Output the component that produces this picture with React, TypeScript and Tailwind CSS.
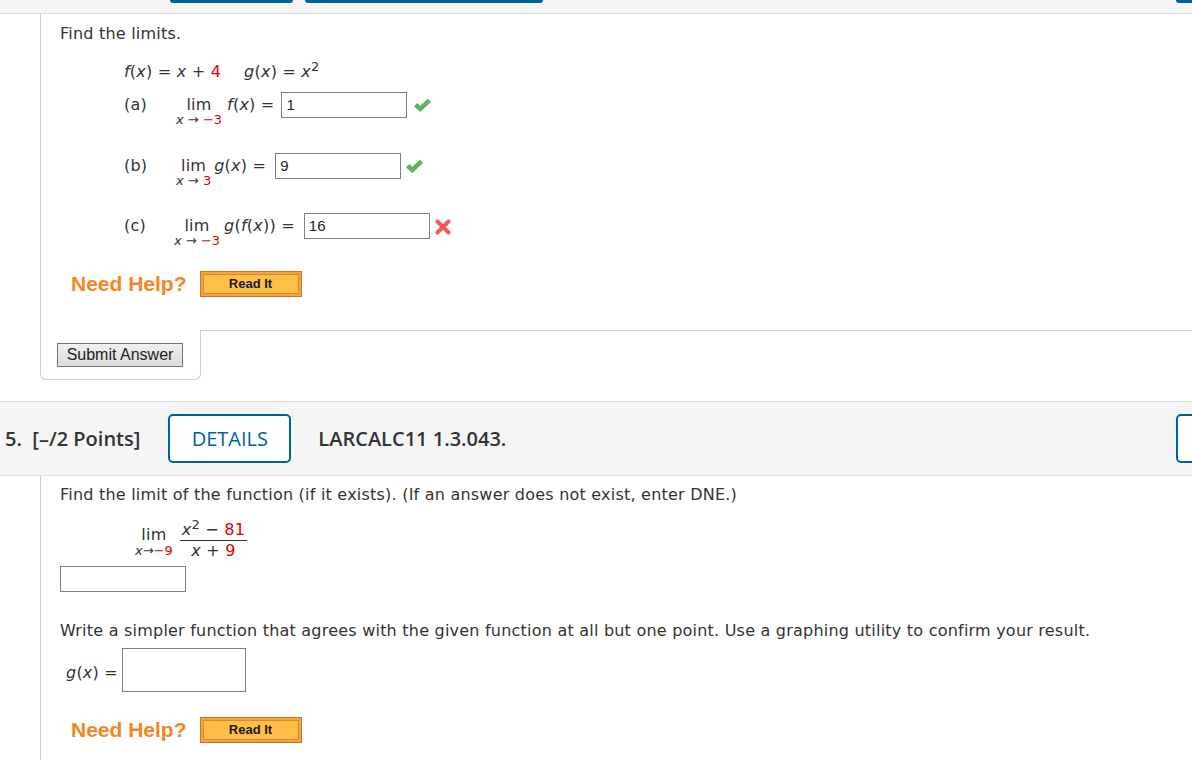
import React from 'react';

const verdana = "font-['DejaVu_Sans',Verdana,sans-serif]";
const arial = "font-['Liberation_Sans',Arial,sans-serif]";
const openSans = "font-['Open_Sans','Noto_Sans',sans-serif]";

const Red: React.FC<{ children: React.ReactNode }> = ({ children }) => (
  <span className="text-[#e00000]">{children}</span>
);

const I: React.FC<{ children: React.ReactNode }> = ({ children }) => <i>{children}</i>;

const Check = () => (
  <svg width="19" height="15" viewBox="0 0 19 15" className="shrink-0">
    <path d="M1.5 8.2 L4.3 5.6 L7.2 8.4 L14.8 1.2 L17.6 3.9 L7.2 13.6 Z" fill="#5cb85c" stroke="#4a9f4a" strokeWidth="0.8" strokeLinejoin="round" />
  </svg>
);

const Cross = () => (
  <svg width="18" height="18" viewBox="0 0 18 18" className="shrink-0">
    <path d="M3.5 3.5 L14.5 14.5 M14.5 3.5 L3.5 14.5" stroke="#f45b5b" strokeWidth="4.2" strokeLinecap="round" />
  </svg>
);

const Lim: React.FC<{ to: React.ReactNode }> = ({ to }) => (
  <div className="flex flex-col items-center">
    <span className="leading-[26px]">lim</span>
    <span className="-mt-[5px] text-[13px] leading-[14px] tracking-normal whitespace-nowrap">
      <I>x</I> → {to}
    </span>
  </div>
);

const AnswerBox: React.FC<{ value?: string; w?: string; h?: string }> = ({ value, w = 'w-[126px]', h = 'h-[26px]' }) => (
  <div className={`${w} ${h} shrink-0 border border-[#7f7f7f] bg-white px-[4px] ${arial} text-[15px] leading-[24px] tracking-normal text-[#222]`}>
    {value}
  </div>
);

const NeedHelp = () => (
  <div className="flex h-[26px] items-center pl-[11px]">
    <span className={`${arial} text-[21px] leading-[26px] font-bold tracking-normal text-[#f5861f]`}>Need Help?</span>
    <div className="ml-[13px] h-[26px] w-[102px] border border-[#c7772a] bg-[#f7a23a] p-[2px]">
      <div className={`flex h-full items-center justify-center border border-[#d98a2e] bg-[#ffbf47] ${arial} text-[13px] font-bold tracking-normal text-[#1a1a1a]`}>
        Read It
      </div>
    </div>
  </div>
);

export default function App() {
  return (
    <div className={`min-h-[760px] w-[1192px] overflow-hidden bg-white ${verdana} text-[16px] tracking-[0.22px] text-[#333]`}>
      {/* previous question header, scrolled off */}
      <div className="flex h-[14px] items-start border-b border-[#dddddd] bg-[#f5f5f5]">
        <div className="ml-[170px] h-[3px] w-[123px] rounded-b-[3px] bg-[#00629b]" />
        <div className="ml-[12px] h-[3px] w-[238px] rounded-b-[3px] bg-[#00629b]" />
        <div className="ml-auto -mr-[40px] h-[3px] w-[56px] rounded-b-[3px] bg-[#00629b]" />
      </div>

      {/* question 4 body */}
      <div className="ml-[40px] border-l border-[#cccccc] pl-[19px] pt-[10px] pb-[33px]">
        <p className="leading-[20px]">Find the limits.</p>

        <div className="mt-[18px] pl-[64px] leading-[20px]">
          <span>
            <I>f</I>(<I>x</I>) = <I>x</I> + <Red>4</Red>
          </span>
          <span className="ml-[23px]">
            <I>g</I>(<I>x</I>) = <I>x</I>
            <sup className="text-[13px]">2</sup>
          </span>
        </div>

        {/* (a) */}
        <div className="mt-[10px] flex h-[35px] items-start pl-[64px]">
          <span className="w-[52px] leading-[26px]">(a)</span>
          <Lim to={<Red>−3</Red>} />
          <span className="ml-[5px] leading-[26px] whitespace-nowrap">
            <I>f</I>(<I>x</I>) =
          </span>
          <div className="ml-[7px]">
            <AnswerBox value="1" />
          </div>
          <div className="ml-[6px] mt-[6px]">
            <Check />
          </div>
        </div>

        {/* (b) */}
        <div className="mt-[26px] flex h-[35px] items-start pl-[64px]">
          <span className="w-[52px] leading-[26px]">(b)</span>
          <Lim to={<Red>3</Red>} />
          <span className="ml-[3px] leading-[26px] whitespace-nowrap">
            <I>g</I>(<I>x</I>) =
          </span>
          <div className="ml-[9px]">
            <AnswerBox value="9" />
          </div>
          <div className="ml-[4px] mt-[6px]">
            <Check />
          </div>
        </div>

        {/* (c) */}
        <div className="mt-[25px] flex h-[35px] items-start pl-[64px]">
          <span className="w-[50px] leading-[26px]">(c)</span>
          <Lim to={<Red>−3</Red>} />
          <span className="ml-[4px] leading-[26px] whitespace-nowrap">
            <I>g</I>(<I>f</I>(<I>x</I>)) =
          </span>
          <div className="ml-[9px]">
            <AnswerBox value="16" />
          </div>
          <div className="ml-[4px] mt-[5px]">
            <Cross />
          </div>
        </div>

        <div className="mt-[23px]">
          <NeedHelp />
        </div>
      </div>

      {/* submit tab */}
      <div className="flex">
        <div className="ml-[40px] h-[50px] w-[161px] shrink-0 rounded-b-[6px] border-x border-b border-[#cccccc] pl-[16px] pt-[13px]">
          <button className={`h-[24px] w-[126px] border border-[#767676] bg-gradient-to-b from-[#f0f0f0] to-[#dcdcdc] ${arial} text-[16px] leading-[20px] tracking-normal text-[#222]`}>
            Submit Answer
          </button>
        </div>
        <div className="flex-1 border-t border-[#cccccc]" />
      </div>

      {/* question 5 header */}
      <div className={`mt-[21px] flex h-[75px] items-center border-y border-[#dddddd] bg-[#f5f5f5] ${openSans} text-[20px] tracking-normal`}>
        <span className="ml-[5px] font-semibold text-[#333] whitespace-nowrap">5.&nbsp;&nbsp;[–/2 Points]</span>
        <div className="ml-[28px] flex h-[49px] w-[123px] items-center justify-center rounded-[5px] border-2 border-[#00629b] bg-white text-[#00629b]">
          DETAILS
        </div>
        <span className="ml-[27px] font-semibold text-[#333]">LARCALC11 1.3.043.</span>
        <div className="ml-auto -mr-[60px] h-[49px] w-[76px] rounded-[5px] border-2 border-[#00629b] bg-white" />
      </div>

      {/* question 5 body */}
      <div className="ml-[40px] border-l border-[#cccccc] pl-[19px] pt-[9px] pb-[20px]">
        <p className="leading-[20px]">
          Find the limit of the function (if it exists). (If an answer does not exist, enter DNE.)
        </p>

        <div className="mt-[15px] flex items-end pl-[75px]">
          <div className="flex flex-col items-center pb-[2px]">
            <span className="leading-[18px]">lim</span>
            <span className="text-[13px] leading-[14px] tracking-normal whitespace-nowrap">
              <I>x</I>→<Red>−9</Red>
            </span>
          </div>
          <div className="ml-[7px] flex flex-col items-center">
            <span className="px-[2px] leading-[20px] whitespace-nowrap">
              <I>x</I>
              <sup className="text-[13px]">2</sup> − <Red>81</Red>
            </span>
            <div className="h-px w-full bg-[#333]" />
            <span className="leading-[19px] whitespace-nowrap">
              <I>x</I> + <Red>9</Red>
            </span>
          </div>
        </div>

        <div className="mt-[6px]">
          <AnswerBox />
        </div>

        <p className="mt-[29px] leading-[20px]">
          Write a simpler function that agrees with the given function at all but one point. Use a graphing utility to confirm your result.
        </p>

        <div className="mt-[7px] flex items-center pl-[6px]">
          <span className="mt-[6px] whitespace-nowrap">
            <I>g</I>(<I>x</I>) =
          </span>
          <div className="ml-[4px]">
            <AnswerBox w="w-[124px]" h="h-[44px]" />
          </div>
        </div>

        <div className="mt-[25px]">
          <NeedHelp />
        </div>
      </div>
    </div>
  );
}
